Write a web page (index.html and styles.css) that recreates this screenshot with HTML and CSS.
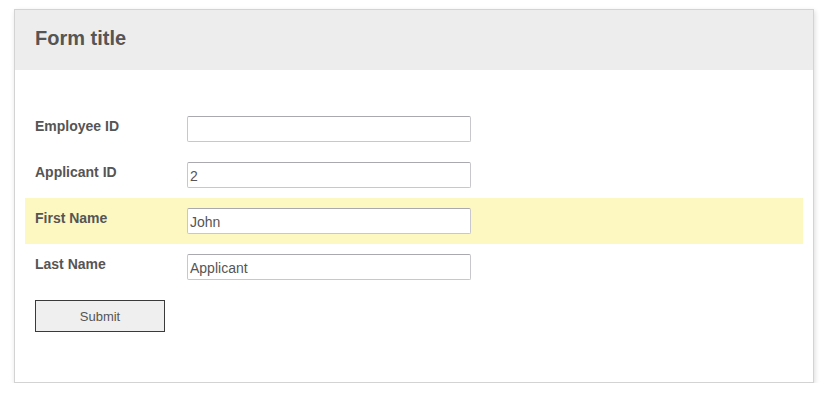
FILE: index.html
```html
<!DOCTYPE html>
<html>
<head>
<meta charset="utf-8">
<link rel="stylesheet" href="styles.css">
</head>
<body>
<div class="card">
  <div class="card-header"><h1 class="title">Form title</h1></div>
  <form class="card-body">
    <div class="row"><label class="label">Employee ID</label><input class="field" type="text" value=""></div>
    <div class="row"><label class="label">Applicant ID</label><input class="field" type="text" value="2"></div>
    <div class="row row-active"><label class="label">First Name</label><input class="field" type="text" value="John"></div>
    <div class="row"><label class="label">Last Name</label><input class="field" type="text" value="Applicant"></div>
    <div class="row-submit"><button class="submit" type="button">Submit</button></div>
  </form>
</div>
</body>
</html>
```
FILE: styles.css
```css
html, body { margin: 0; padding: 0; background: #fff; }
body { padding: 9px 0 0 14px; font-family: "Liberation Sans", Arial, sans-serif; color: #555; }
.card {
  width: 798px;
  border: 1px solid #d3d3d3;
  box-shadow: 1px 2px 5px rgba(0,0,0,0.14);
  background: #fff;
}
.card-header {
  background: #ededed;
  height: 60px;
  display: flex;
  align-items: center;
  padding-left: 20px;
}
.title { margin: 0; font-size: 20px; font-weight: bold; color: #555; position: relative; top: -2px; }
.card-body { padding: 36px 10px 40px; display: flex; flex-direction: column; }
.row {
  display: flex;
  align-items: flex-start;
  height: 46px;
  box-sizing: border-box;
  padding: 10px 10px;
}
.row-active { background: #fdf7c2; }
.label {
  width: 152px;
  flex: none;
  font-size: 14px;
  font-weight: bold;
  color: #555;
  padding-top: 2px;
}
.field {
  box-sizing: border-box;
  width: 284px;
  height: 26px;
  margin: 0;
  padding: 1px 2px 0;
  border: 1px solid #c8c8cc;
  border-top-color: #a9a9ae;
  border-radius: 2px;
  font-family: "Liberation Sans", Arial, sans-serif;
  font-size: 14px;
  color: #555;
  background: #fff;
}
.row-submit { padding: 10px 10px; }
.submit {
  display: block;
  width: 130px;
  height: 32px;
  margin: 0;
  border: 1px solid #3a3a3a;
  background: #efefef;
  font-family: "Liberation Sans", Arial, sans-serif;
  font-size: 13px;
  color: #555;
  padding: 0;
}
```
